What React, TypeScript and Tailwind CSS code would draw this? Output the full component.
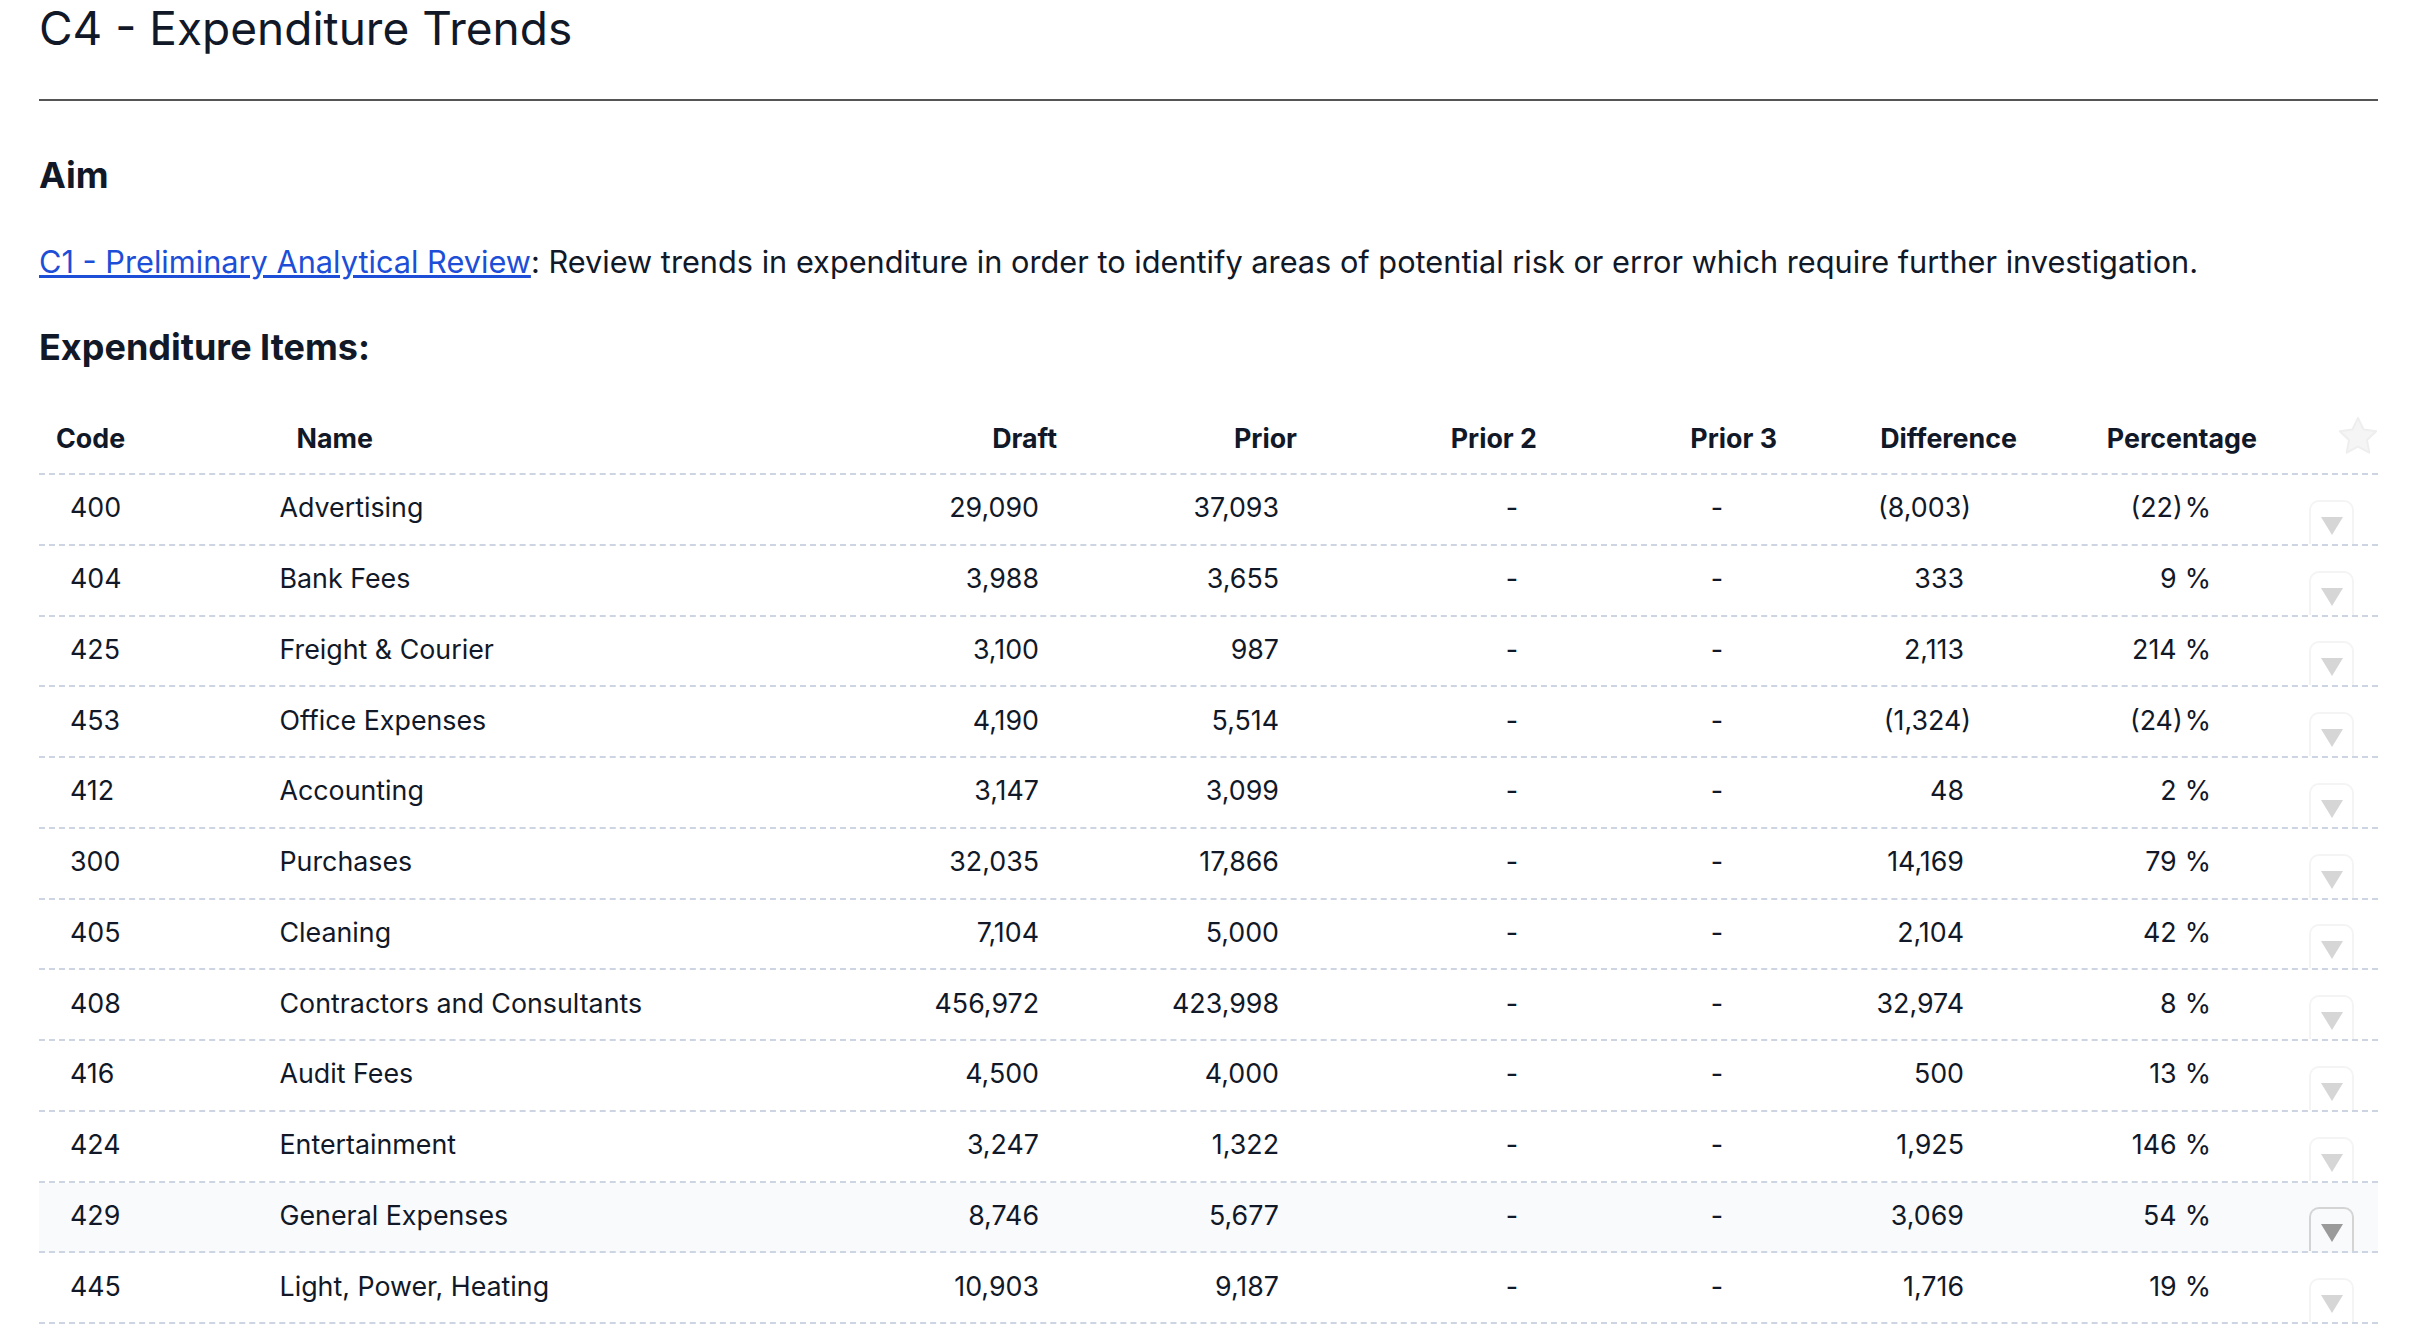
const rows = [
  ["400", "Advertising", "29,090", "37,093", "(8,003)", "(22)"],
  ["404", "Bank Fees", "3,988", "3,655", "333", "9"],
  ["425", "Freight & Courier", "3,100", "987", "2,113", "214"],
  ["453", "Office Expenses", "4,190", "5,514", "(1,324)", "(24)"],
  ["412", "Accounting", "3,147", "3,099", "48", "2"],
  ["300", "Purchases", "32,035", "17,866", "14,169", "79"],
  ["405", "Cleaning", "7,104", "5,000", "2,104", "42"],
  ["408", "Contractors and Consultants", "456,972", "423,998", "32,974", "8"],
  ["416", "Audit Fees", "4,500", "4,000", "500", "13"],
  ["424", "Entertainment", "3,247", "1,322", "1,925", "146"],
  ["429", "General Expenses", "8,746", "5,677", "3,069", "54"],
  ["445", "Light, Power, Heating", "10,903", "9,187", "1,716", "19"],
];

const grid = "grid grid-cols-[240.5px_445.5px_332px_240px_240px_240px_240px_240px_122px]";

export default function App() {
  return (
    <div className="w-[2424px] h-[1334px] overflow-hidden bg-white pl-[39px] pr-[46px] text-[#111827] font-['Inter','Liberation_Sans',sans-serif]">
      <h1 className="h-[101px] pt-[2px] text-[46px] leading-[52px] font-normal border-b-2 border-[#555555]">C4 - Expenditure Trends</h1>
      <h2 className="mt-[49px] text-[36px] leading-[50px] font-bold">Aim</h2>
      <p className="mt-[37px] text-[30.72px] leading-[50px]">
        <a href="#" className="text-[#1d4ed8] underline">C1 - Preliminary Analytical Review</a>: Review trends in expenditure in order to identify areas of potential risk or error which require further investigation.
      </p>
      <h2 className="mt-[35px] text-[36px] leading-[50px] font-bold">Expenditure Items:</h2>
      <div className="mt-[28px]">
        <div className={`${grid} h-[75px] pt-[4px] items-center text-[26.8px] font-bold border-b-2 border-dashed border-[#cdd5e2]`}>
          <div className="pl-[17px]">Code</div>
          <div className="pl-[17px]">Name</div>
          <div className="text-right">Draft</div>
          <div className="text-right">Prior</div>
          <div className="text-right">Prior 2</div>
          <div className="text-right">Prior 3</div>
          <div className="text-right">Difference</div>
          <div className="text-right">Percentage</div>
          <div className="flex justify-end -mr-[2px] pb-[6px]">
            <svg width="46" height="46" viewBox="0 0 24 24" fill="#f5f5f5" stroke="#eeeeee" strokeWidth="1" strokeLinejoin="round">
              <path d="M12 2.500l2.900 6.100 6.600.9-4.800 4.600 1.200 6.600-5.900-3.200-5.900 3.200 1.200-6.600L2.500 9.500l6.600-.9z" />
            </svg>
          </div>
        </div>
        {rows.map((r) => {
          const active = r[0] === "429";
          const negDiff = r[4].startsWith("(");
          const negPct = r[5].startsWith("(");
          return (
            <div key={r[0]} className={`${grid} h-[70.75px] pb-[4px] items-center text-[26.8px] overflow-hidden border-b-2 border-dashed border-[#cdd5e2] ${active ? "bg-[#f8fafc]" : ""}`}>
              <div className="pl-[31px]">{r[0]}</div>
              <div>{r[1]}</div>
              <div className="text-right pr-[18px]">{r[2]}</div>
              <div className="text-right pr-[18px]">{r[3]}</div>
              <div className="text-right pr-[19px]">-</div>
              <div className="text-right pr-[54px]">-</div>
              <div className={`text-right ${negDiff ? "pr-[46px]" : "pr-[53px]"}`}>{r[4]}</div>
              <div className="text-right pr-[46px]">
                {r[5]}
                <span className={negPct ? "ml-[2px]" : "ml-[8px]"}>%</span>
              </div>
              <div className="self-end pl-[52px] -mb-[4px]">
                <button className={`flex justify-center w-[45px] h-[44px] pt-[15px] rounded-t-[10px] border-2 border-b-0 ${active ? "border-[#d4d4d4]" : "border-[#f4f4f4]"}`}>
                  <svg width="24" height="18" viewBox="0 0 24 18">
                    <path d="M1 0h22L12 18z" fill={active ? "#9a9a9a" : "#d6d6d6"} />
                  </svg>
                </button>
              </div>
            </div>
          );
        })}
      </div>
    </div>
  );
}
